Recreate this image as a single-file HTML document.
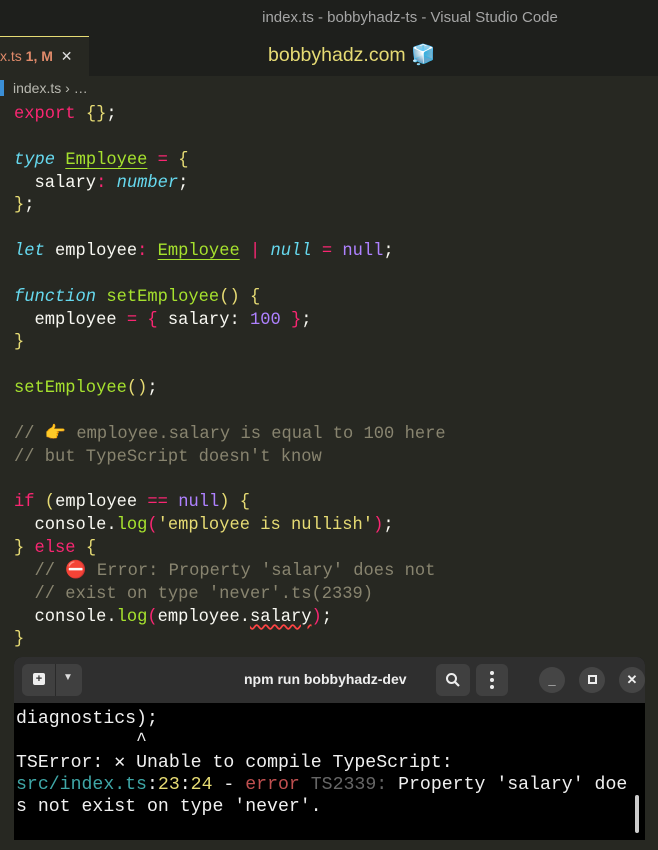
<!DOCTYPE html>
<html><head><meta charset="utf-8"><style>
*{margin:0;padding:0;box-sizing:border-box}
body{width:658px;height:850px;background:#272822;overflow:hidden;position:relative;font-family:"Liberation Sans",sans-serif}
.title{position:absolute;top:0;left:0;width:658px;height:36px;background:#1e1f1c;color:#a5a5a5;font-size:15px;text-align:center;line-height:36px;padding-left:162px}
.tabbar{position:absolute;top:36px;left:0;width:658px;height:40px;background:#1e1f1c}
.tab{position:absolute;left:0;top:0;width:89px;height:40px;background:#272822;border-top:1px solid #e6db74;color:#e08a6a;font-size:14px;line-height:38px;white-space:nowrap;overflow:hidden}
.brand{position:absolute;left:268px;top:7px;color:#e6db74;font-size:19.5px}
.crumb{position:absolute;top:80px;left:0;color:#b8b8b0;font-size:14px;white-space:nowrap}
.code{position:absolute;top:104px;left:14px;font-family:"Liberation Mono",monospace;font-size:17.1px;line-height:22.85px;color:#f8f8f2;white-space:pre}
.k{color:#f92672}.s{color:#66d9ef;font-style:italic}.t{color:#a6e22e;text-decoration:underline;text-decoration-color:#a6e22e;text-underline-offset:4px}
.y{color:#e6db74}.p{color:#ae81ff}.g{color:#a6e22e}.c{color:#88846f}.pk{color:#f92672}
.sq{text-decoration:underline wavy #f44;text-underline-offset:3px}
.term{position:absolute;left:14px;top:657px;width:631px;height:183px;background:#000;border-radius:8px 8px 0 0;overflow:hidden}
.th{height:46px;background:#2f2f2f;position:relative;color:#eee;font-weight:bold;font-size:14px}
.btn{position:absolute;background:#404040;border-radius:6px}
.circ{position:absolute;width:26px;height:26px;border-radius:13px;background:#454545;color:#eee;text-align:center;line-height:26px;font-size:13px;font-weight:bold}
.tb{padding:5px 0 0 2px;font-family:"Liberation Mono",monospace;font-size:18.2px;line-height:22px;color:#f0f0f0;white-space:pre}
</style></head><body>
<div class="title">index.ts - bobbyhadz-ts - Visual Studio Code</div>
<div class="tabbar"><div class="tab">x.ts <b style="font-weight:bold">1, M</b> &nbsp;<span style="color:#ddd">✕</span></div><div class="brand">bobbyhadz.com <span style="color:#8fd0f0">🧊</span></div></div>
<div class="crumb"><span style="display:inline-block;width:4px;height:16px;background:#3b8fd6;vertical-align:-3px;margin-right:9px"></span>index.ts › …</div>
<div class="code"><span class="k">export</span> <span class="y">{}</span>;

<span class="s">type</span> <span class="t">Employee</span> <span class="k">=</span> <span class="y">{</span>
  salary<span class="k">:</span> <span class="s">number</span>;
<span class="y">}</span>;

<span class="s">let</span> employee<span class="k">:</span> <span class="t">Employee</span> <span class="k">|</span> <span class="s">null</span> <span class="k">=</span> <span class="p">null</span>;

<span class="s">function</span> <span class="g">setEmployee</span><span class="y">()</span> <span class="y">{</span>
  employee <span class="k">=</span> <span class="pk">{</span> salary: <span class="p">100</span> <span class="pk">}</span>;
<span class="y">}</span>

<span class="g">setEmployee</span><span class="y">()</span>;

<span class="c">// 👉 employee.salary is equal to 100 here</span>
<span class="c">// but TypeScript doesn't know</span>

<span class="k">if</span> <span class="y">(</span>employee <span class="k">==</span> <span class="p">null</span><span class="y">)</span> <span class="y">{</span>
  console.<span class="g">log</span><span class="pk">(</span><span class="y">'employee is nullish'</span><span class="pk">)</span>;
<span class="y">}</span> <span class="k">else</span> <span class="y">{</span>
  <span class="c">// ⛔ Error: Property 'salary' does not</span>
  <span class="c">// exist on type 'never'.ts(2339)</span>
  console.<span class="g">log</span><span class="pk">(</span>employee.<span class="sq">salary</span><span class="pk">)</span>;
<span class="y">}</span></div>
<div class="term">
<div class="th">
<div class="btn" style="left:8px;top:7px;width:60px;height:32px"></div>
<div style="position:absolute;left:41px;top:7px;width:1px;height:32px;background:#2a2a2a"></div>
<div style="position:absolute;left:19px;top:16px;width:12px;height:12px;background:#eee;border-radius:2px;color:#333;font-size:11px;line-height:12px;text-align:center">+</div>
<div style="position:absolute;left:49px;top:15px;color:#ddd;font-size:10px">▼</div>
<div style="position:absolute;left:230px;top:14px">npm run bobbyhadz-dev</div>
<div class="btn" style="left:422px;top:7px;width:34px;height:32px"></div>
<svg style="position:absolute;left:431px;top:15px" width="16" height="16" viewBox="0 0 16 16"><circle cx="6.5" cy="6.5" r="4.5" stroke="#eee" stroke-width="2" fill="none"/><path d="M10 10l4 4" stroke="#eee" stroke-width="2.2"/></svg>
<div class="btn" style="left:462px;top:7px;width:32px;height:32px"></div>
<div style="position:absolute;left:476px;top:14px;width:4px;height:4px;border-radius:2px;background:#eee;box-shadow:0 7px 0 #eee,0 14px 0 #eee"></div>
<div class="circ" style="left:525px;top:10px">_</div>
<div class="circ" style="left:565px;top:10px"><div style="width:9px;height:9px;border:2px solid #eee;margin:8px auto"></div></div>
<div class="circ" style="left:605px;top:10px">✕</div>
</div>
<div class="tb">diagnostics);
           ^
TSError: ✕ Unable to compile TypeScript:
<span style="color:#3fa7a7">src/index.ts</span>:<span style="color:#e6db74">23</span>:<span style="color:#e6db74">24</span> - <span style="color:#c05050">error</span> <span style="color:#666">TS2339:</span> Property 'salary' doe
s not exist on type 'never'.</div>
<div style="position:absolute;left:621px;top:138px;width:4px;height:38px;background:#ccc;border-radius:2px"></div>
</div>
</body></html>
